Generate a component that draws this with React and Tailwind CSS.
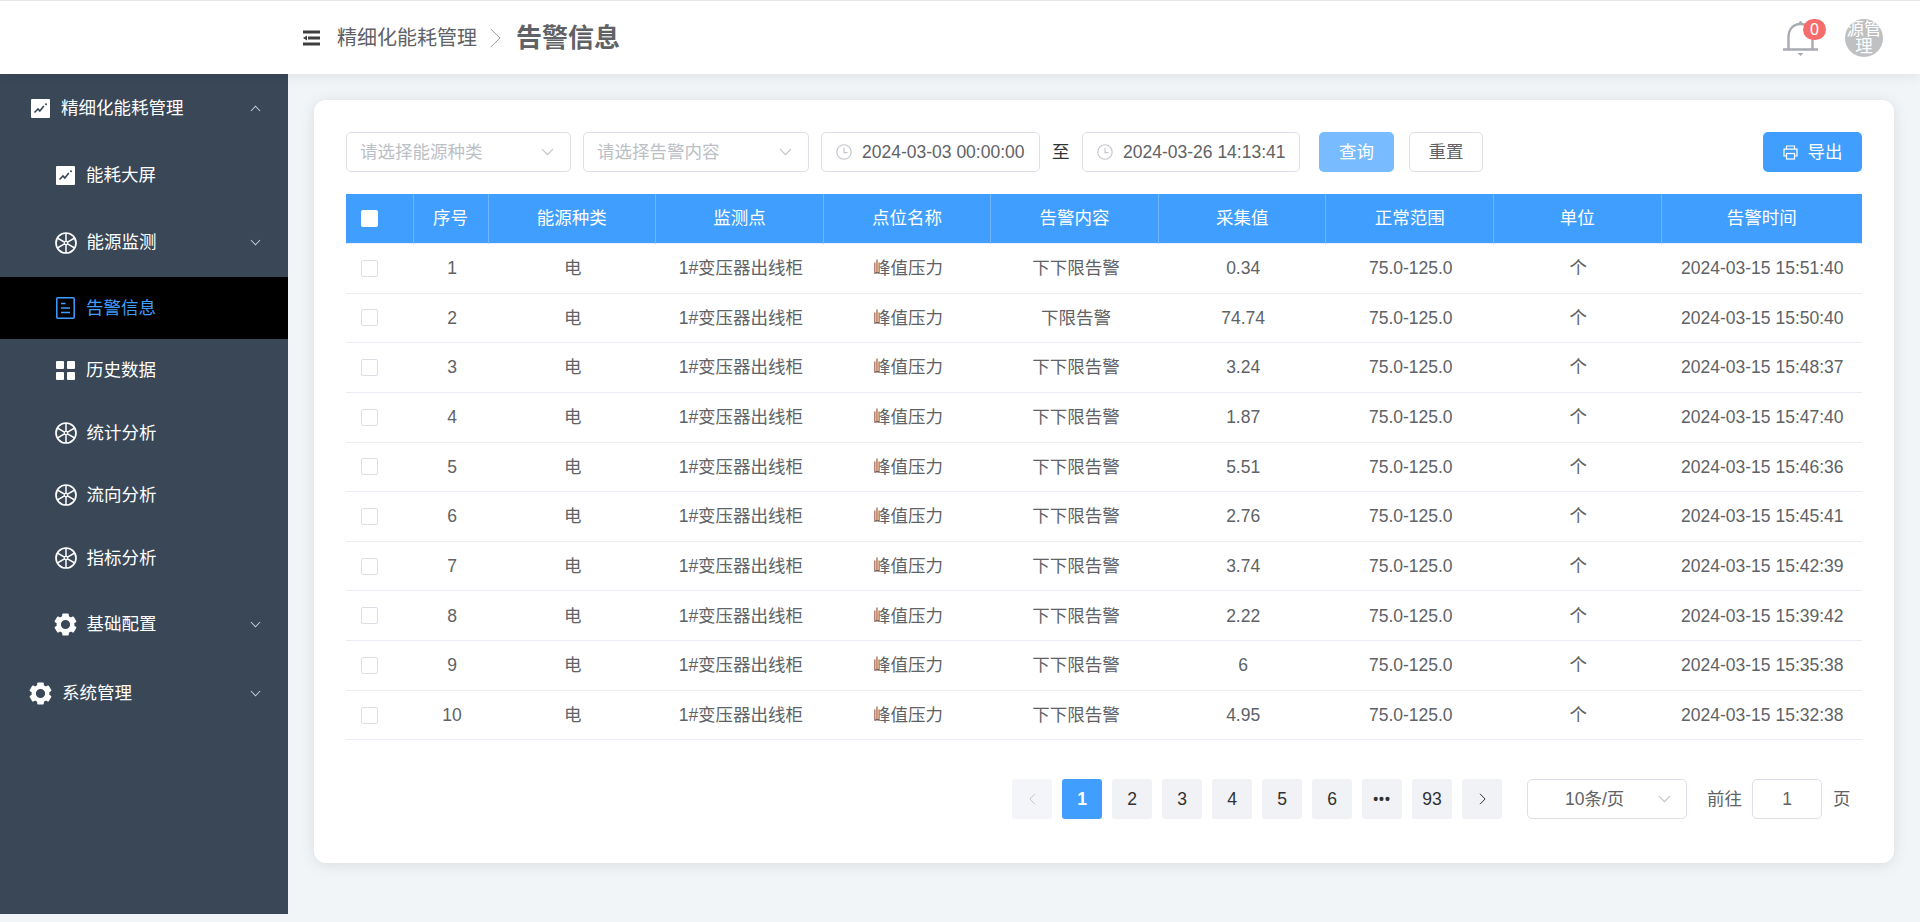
const COLS = ["w-[67.5px]", "w-[75px]", "w-[167.6px]", "w-[167.6px]", "w-[167.6px]", "w-[167.6px]", "w-[167.6px]", "w-[167.6px]", "w-[167.6px]", "w-[200.3px]"];
const HEADERS = ["序号", "能源种类", "监测点", "点位名称", "告警内容", "采集值", "正常范围", "单位", "告警时间"];

const ROWS = [
  ["1", "下下限告警", "0.34", "15:51:40"],
  ["2", "下限告警", "74.74", "15:50:40"],
  ["3", "下下限告警", "3.24", "15:48:37"],
  ["4", "下下限告警", "1.87", "15:47:40"],
  ["5", "下下限告警", "5.51", "15:46:36"],
  ["6", "下下限告警", "2.76", "15:45:41"],
  ["7", "下下限告警", "3.74", "15:42:39"],
  ["8", "下下限告警", "2.22", "15:39:42"],
  ["9", "下下限告警", "6", "15:35:38"],
  ["10", "下下限告警", "4.95", "15:32:38"],
];

function Chevron({ up, className }) {
  return (
    <svg viewBox="0 0 12 7" className={className} fill="none" stroke="currentColor" strokeWidth="1.1">
      <path d={up ? "M1 6.2 6 1l5 5.2" : "M1 .8 6 6l5-5.2"} />
    </svg>
  );
}

function TrendIcon() {
  return (
    <svg viewBox="0 0 19 19" className="w-[19px] h-[19px] shrink-0">
      <rect width="19" height="19" rx="1" fill="#fff" />
      <path d="M3.5 13.5 7 10l1.8 2 4-5" fill="none" stroke="#394757" strokeWidth="1.6" />
      <circle cx="15" cy="5.2" r="1" fill="#394757" />
    </svg>
  );
}

function WheelIcon() {
  return (
    <svg viewBox="0 0 22 22" className="w-[22px] h-[22px] shrink-0" fill="none" stroke="#fff">
      <circle cx="11" cy="11" r="10" strokeWidth="1.7" />
      <circle cx="11" cy="11" r="1.7" strokeWidth="1.3" />
      <path d="M11 1v8.3M11 12.7V21M2.3 6l7.2 4.1M12.5 11.9l7.2 4.1M2.3 16l7.2-4.1M12.5 10.1 19.7 6" strokeWidth="1.5" />
    </svg>
  );
}

function GearIcon() {
  return (
    <svg viewBox="0 0 23 23" className="w-[23px] h-[23px] shrink-0">
      {[0, 60, 120, 180, 240, 300].map((a) => (
        <rect key={a} x="8.2" y="0.4" width="6.6" height="5" rx="1" fill="#fff" transform={`rotate(${a} 11.5 11.5)`} />
      ))}
      <circle cx="11.5" cy="11.5" r="6.8" fill="none" stroke="#fff" strokeWidth="4.4" />
    </svg>
  );
}

function GridIcon() {
  return (
    <svg viewBox="0 0 19 19" className="w-[19px] h-[19px] shrink-0" fill="#fff">
      <rect width="8" height="8" rx="1" />
      <rect x="11" width="8" height="8" rx="1" />
      <rect y="11" width="8" height="8" rx="1" />
      <rect x="11" y="11" width="8" height="8" rx="1" />
    </svg>
  );
}

function DocIcon() {
  return (
    <svg viewBox="0 0 19 22" className="w-[19px] h-[22px] shrink-0" fill="none" stroke="#409eff" strokeWidth="1.5">
      <rect x=".8" y=".8" width="17.4" height="20.4" rx="1" />
      <path d="M5 6.5h4.5M5 11h9M5 15.5h9" />
    </svg>
  );
}

function ClockIcon() {
  return (
    <svg viewBox="0 0 16 16" className="w-[16px] h-[16px] shrink-0" fill="none" stroke="#c0c4cc" strokeWidth="1.1">
      <circle cx="8" cy="8" r="7.2" />
      <path d="M8 3.8V8.6h3.4" />
    </svg>
  );
}

function MenuItem({ icon, label, chevron, up, active, className }) {
  return (
    <div className={`flex items-center ${active ? "bg-black text-[#409eff]" : "text-white"} ${className}`}>
      {icon}
      <span>{label}</span>
      {chevron && <Chevron up={up} className="w-[11px] h-[7px] ml-auto mr-[27px] text-[#ccd1d7]" />}
    </div>
  );
}

function Select({ placeholder, className }) {
  return (
    <div className={`h-[40px] flex items-center pl-[13px] pr-[16px] bg-white border border-[#dcdfe6] rounded-[5px] text-[#bcbfc6] ${className}`}>
      <span>{placeholder}</span>
      <Chevron className="w-[13px] h-[8px] ml-auto text-[#c0c4cc]" />
    </div>
  );
}

function DateBox({ value, className }) {
  return (
    <div className={`h-[40px] flex items-center pl-[14px] gap-[10px] bg-white border border-[#dcdfe6] rounded-[5px] text-[#606266] ${className}`}>
      <ClockIcon />
      <span>{value}</span>
    </div>
  );
}

function PageBtn({ children, active, dim }) {
  return (
    <div className={`w-[40px] h-[40px] rounded-[3px] flex items-center justify-center ${active ? "bg-[#409eff] text-white font-bold" : dim ? "bg-[#f4f5f8] text-[#c0c4cc]" : "bg-[#f0f2f5] text-[#303133]"}`}>
      {children}
    </div>
  );
}

export default function App() {
  return (
    <div className="w-[1920px] h-[922px] overflow-hidden bg-[#f2f5f8] text-[17.5px] font-['Liberation_Sans','Noto_Sans_CJK_SC',sans-serif]">
      {/* top bar */}
      <header className="relative z-10 h-[74px] bg-white border-t border-[#e4e6ea] shadow-[0_2px_12px_rgba(0,0,0,0.08)] flex items-center pl-[303px] pr-[37px]">
        <svg viewBox="0 0 17 16" className="w-[17px] h-[16px] mt-[1px]" fill="#3f3f3f">
          <rect x="0" y="0.5" width="17" height="3" />
          <rect x="5" y="6.5" width="12" height="3" />
          <path d="M0 8l4-2.4v4.8z" />
          <rect x="0" y="12.5" width="17" height="3" />
        </svg>
        <span className="ml-[17px] mt-[1px] text-[20px] text-[#606266]">精细化能耗管理</span>
        <svg viewBox="0 0 11 20" className="w-[11px] h-[20px] ml-[13px] mt-[1px]" fill="none" stroke="#9a9da5" strokeWidth="1">
          <path d="M.8 1 10 10 .8 19" />
        </svg>
        <span className="ml-[15px] mt-[1px] text-[26px] font-bold text-[#606266]">告警信息</span>
        <div className="ml-auto relative w-[35px] h-[36px] mr-[27px]">
          <svg viewBox="0 0 35 36" className="w-[35px] h-[36px]" fill="none" stroke="#a9abb3" strokeWidth="2.4">
            <path d="M0 29.5h35" />
            <path d="M5.5 29V17C5.5 9 10.5 4 17.5 4s12 5 12 13v12" />
            <circle cx="17.5" cy="2.5" r="1.5" fill="#a9abb3" stroke="none" />
            <path d="M14.5 33h6l-3 3z" fill="#a9abb3" stroke="none" />
          </svg>
          <span className="absolute left-[20px] top-[-1px] w-[23px] h-[21px] rounded-full bg-[#f56c6c] text-white text-[16px] leading-[21px] text-center">0</span>
        </div>
        <div className="w-[38px] h-[38px] rounded-full overflow-hidden bg-[#bfc0c2] text-white text-[17.5px] leading-[17px] text-center flex flex-col items-center justify-center">
          <span className="whitespace-nowrap">源管</span>
          <span>理</span>
        </div>
      </header>

      <div className="flex">
        {/* side menu */}
        <aside className="w-[288px] h-[840px] shrink-0 bg-[#394757]">
          <MenuItem icon={<TrendIcon />} label="精细化能耗管理" chevron up className="h-[68px] pl-[31px] gap-[11px]" />
          <MenuItem icon={<TrendIcon />} label="能耗大屏" className="h-[66px] pl-[56px] gap-[11px]" />
          <MenuItem icon={<WheelIcon />} label="能源监测" chevron className="h-[69px] pl-[55px] gap-[9.5px]" />
          <MenuItem icon={<DocIcon />} label="告警信息" active className="h-[62px] pl-[56px] gap-[11px]" />
          <MenuItem icon={<GridIcon />} label="历史数据" className="h-[62.5px] pl-[56px] gap-[11px]" />
          <MenuItem icon={<WheelIcon />} label="统计分析" className="h-[62.5px] pl-[55px] gap-[9.5px]" />
          <MenuItem icon={<WheelIcon />} label="流向分析" className="h-[62.5px] pl-[55px] gap-[9.5px]" />
          <MenuItem icon={<WheelIcon />} label="指标分析" className="h-[62.5px] pl-[55px] gap-[9.5px]" />
          <MenuItem icon={<GearIcon />} label="基础配置" chevron className="h-[70px] pl-[54px] gap-[9.5px]" />
          <MenuItem icon={<GearIcon />} label="系统管理" chevron className="h-[69px] pl-[29px] gap-[10px]" />
        </aside>

        <main className="flex-1 pt-[26px] pl-[26px] pr-[26px]">
          <section className="w-[1580px] h-[763px] bg-white rounded-[12px] shadow-[0_2px_15px_rgba(0,0,0,0.1)] pt-[32px] px-[32px]">
            {/* filters */}
            <div className="flex items-center">
              <Select placeholder="请选择能源种类" className="w-[225px]" />
              <Select placeholder="请选择告警内容" className="w-[226px] ml-[12px]" />
              <DateBox value="2024-03-03 00:00:00" className="w-[219px] ml-[12px]" />
              <span className="ml-[12px] w-[30px] text-[#303133]">至</span>
              <DateBox value="2024-03-26 14:13:41" className="w-[218px]" />
              <button className="ml-[19px] w-[75px] h-[40px] rounded-[5px] bg-[#79bbff] text-white">查询</button>
              <button className="ml-[15px] w-[74px] h-[40px] rounded-[5px] bg-white border border-[#dcdfe6] text-[#606266]">重置</button>
              <button className="ml-auto w-[99px] h-[40px] rounded-[5px] bg-[#409eff] text-white flex items-center justify-center gap-[10px]">
                <svg viewBox="0 0 15 15" className="w-[15px] h-[15px]" fill="none" stroke="#fff" strokeWidth="1.2">
                  <path d="M3.5 4V1h8v3" />
                  <path d="M3.5 11H1V4.2h13V11h-2.5" />
                  <rect x="3.5" y="8.5" width="8" height="5.5" />
                </svg>
                <span>导出</span>
              </button>
            </div>

            {/* table */}
            <table className="mt-[22px] w-[1516px] table-fixed border-separate border-spacing-0 text-center text-[#606266]">
              <colgroup>
                {COLS.map((c, i) => (
                  <col key={i} className={c} />
                ))}
              </colgroup>
              <thead>
                <tr className="h-[50px] bg-[#409eff] text-white">
                  <th className="p-0 text-left pl-[15px] border-r border-b border-r-white/25 border-b-[#ebeef5]">
                    <div className="w-[17px] h-[17px] rounded-[2px] bg-white" />
                  </th>
                  {HEADERS.map((h, i) => (
                    <th key={h} className={`p-0 font-normal border-b border-b-[#ebeef5] ${i < 8 ? "border-r border-r-white/25" : ""}`}>{h}</th>
                  ))}
                </tr>
              </thead>
              <tbody>
                {ROWS.map(([no, content, val, time]) => (
                  <tr key={no} className="h-[49.65px]">
                    <td className="p-0 pl-[15px] border-b border-[#ebeef5]">
                      <div className="w-[17px] h-[17px] rounded-[2px] border border-[#dcdfe6] bg-white" />
                    </td>
                    <td className="p-0 pl-[2px] border-b border-[#ebeef5]">{no}</td>
                    <td className="p-0 pl-[1px] border-b border-[#ebeef5]">电</td>
                    <td className="p-0 pl-[2px] border-b border-[#ebeef5]">1#变压器出线柜</td>
                    <td className="p-0 pl-[1px] border-b border-[#ebeef5]">峰值压力</td>
                    <td className="p-0 pl-[2px] border-b border-[#ebeef5]">{content}</td>
                    <td className="p-0 pl-[1px] border-b border-[#ebeef5]">{val}</td>
                    <td className="p-0 pl-[1px] border-b border-[#ebeef5]">75.0-125.0</td>
                    <td className="p-0 pl-[1px] border-b border-[#ebeef5]">个</td>
                    <td className="p-0 pl-[1px] border-b border-[#ebeef5]">2024-03-15 {time}</td>
                  </tr>
                ))}
              </tbody>
            </table>

            {/* pagination */}
            <div className="mt-[39px] flex items-center pl-[666px] text-[#606266]">
              <div className="flex gap-[10px]">
                <PageBtn dim>
                  <svg viewBox="0 0 7 12" className="w-[7px] h-[12px]" fill="none" stroke="currentColor"><path d="M6 .8.9 6 6 11.2" /></svg>
                </PageBtn>
                <PageBtn active>1</PageBtn>
                <PageBtn>2</PageBtn>
                <PageBtn>3</PageBtn>
                <PageBtn>4</PageBtn>
                <PageBtn>5</PageBtn>
                <PageBtn>6</PageBtn>
                <PageBtn><span className="font-bold tracking-[1px] text-[14px]">•••</span></PageBtn>
                <PageBtn>93</PageBtn>
                <PageBtn>
                  <svg viewBox="0 0 7 12" className="w-[7px] h-[12px]" fill="none" stroke="currentColor"><path d="M1 .8 6.1 6 1 11.2" /></svg>
                </PageBtn>
              </div>
              <div className="ml-[25px] w-[160px] h-[40px] flex items-center pl-[37px] pr-[15px] border border-[#dcdfe6] rounded-[5px]">
                <span>10条/页</span>
                <Chevron className="w-[13px] h-[8px] ml-auto text-[#c0c4cc]" />
              </div>
              <span className="ml-[20px]">前往</span>
              <div className="ml-[10px] w-[70px] h-[40px] flex items-center justify-center border border-[#dcdfe6] rounded-[5px]">1</div>
              <span className="ml-[11px]">页</span>
            </div>
          </section>
        </main>
      </div>
    </div>
  );
}
